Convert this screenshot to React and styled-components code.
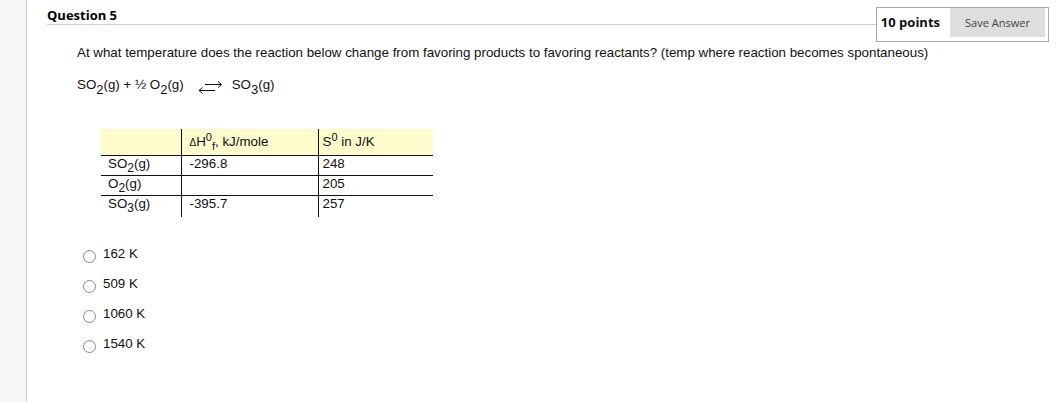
import React from "react";
import styled, { createGlobalStyle } from "styled-components";

const Global = createGlobalStyle`
  html, body { margin: 0; padding: 0; height: 100%; background: #fff; }
  #root { min-height: 100%; }
  * { box-sizing: border-box; }
`;

const Page = styled.div`
  display: flex;
  min-height: 100vh;
  font-family: Arial, "Liberation Sans", sans-serif;
  color: #111;
`;

const Sidebar = styled.aside`
  width: 27px;
  flex: none;
  background: #f6f6f6;
  border-right: 1px solid #d2d2d2;
`;

const Main = styled.main`
  flex: 1;
  padding: 0 11px 0 20px;
`;

const Header = styled.header`
  display: flex;
  align-items: flex-start;
`;

const TitleBar = styled.div`
  flex: 1;
  padding-top: 6px;
  border-bottom: 1px solid #cfcfcf;
`;

const Title = styled.h2`
  margin: 0;
  font-family: "Open Sans", sans-serif;
  font-weight: 700;
  font-size: 13px;
  line-height: 18px;
  color: #000;
`;

const PointsBox = styled.div`
  margin-top: 7px;
  height: 35px;
  display: flex;
  align-items: flex-start;
  gap: 10px;
  padding: 0 3px 0 4px;
  border: 1px solid #a9a9a9;
`;

const Points = styled.span`
  font-family: "Open Sans", sans-serif;
  font-weight: 700;
  font-size: 13px;
  line-height: 29px;
  color: #111;
`;

const SaveButton = styled.button`
  height: 29px;
  width: 95px;
  border: none;
  background: #dedede;
  font-family: "Open Sans", sans-serif;
  font-size: 11px;
  color: #444;
  padding: 0;
`;

const Body = styled.section`
  padding-left: 30px;
  margin-top: 3px;
`;

const Prompt = styled.p`
  margin: 0;
  font-size: 13.33px;
  line-height: 15px;
`;

const Equation = styled.div`
  display: flex;
  align-items: center;
  margin-top: 16px;
  font-size: 13.33px;
  line-height: 15px;
  height: 17px;
`;

const Species = styled.span`
  white-space: pre;
`;

const Sub = styled.sub`
  font-size: ${(p) => p.$size || "12px"};
  line-height: 0;
  vertical-align: ${(p) => p.$shift || "-5px"};
`;

const Sup = styled.sup`
  font-size: 11px;
  line-height: 0;
  vertical-align: 5px;
`;

const Arrow = styled.svg`
  margin: 4px 9px 0 14px;
  flex: none;
`;

const DataTable = styled.table`
  margin: 36px 0 0 24px;
  border-collapse: collapse;
  width: 332px;
  font-size: 13.33px;
  line-height: 15px;
  color: #111;
`;

const HeadRow = styled.tr`
  background: #fefbcc;
  height: 26px;
  border-bottom: 1px solid #111;
`;

const Row = styled.tr`
  height: ${(p) => p.$h}px;
  border-top: ${(p) => (p.$first ? "none" : "1px solid #111")};
`;

const Cell = styled.td`
  padding: ${(p) => (p.$head ? "5px" : "0")} 0 0 ${(p) => p.$pad}px;
  vertical-align: top;
  width: ${(p) => p.$w}px;
  border-left: ${(p) => (p.$divider ? "1px solid #111" : "none")};
  white-space: nowrap;
`;

const Delta = styled.span`
  font-size: 10px;
`;

const Options = styled.div`
  margin-top: 29px;
  padding-left: 6px;
  display: flex;
  flex-direction: column;
  gap: 13px;
`;

const Option = styled.label`
  display: flex;
  align-items: flex-start;
  gap: 7px;
  font-size: 13.33px;
  line-height: 15px;
  color: #111;
`;

const Radio = styled.input`
  appearance: none;
  margin: 4px 0 0 0;
  width: 13px;
  height: 13px;
  border: 1px solid #8a8a8a;
  border-radius: 50%;
  background: #fff;
  flex: none;
`;

const rows = [
  { name: "SO", sub: "2", h: "-296.8", s: "248", height: 20 },
  { name: "O", sub: "2", h: "", s: "205", height: 20 },
  { name: "SO", sub: "3", h: "-395.7", s: "257", height: 22 },
];

const answers = ["162 K", "509 K", "1060 K", "1540 K"];

export default function App() {
  return (
    <>
      <Global />
      <Page>
        <Sidebar />
        <Main>
          <Header>
            <TitleBar>
              <Title>Question 5</Title>
            </TitleBar>
            <PointsBox>
              <Points>10 points</Points>
              <SaveButton type="button">Save Answer</SaveButton>
            </PointsBox>
          </Header>
          <Body>
            <Prompt>
              At what temperature does the reaction below change from favoring products to favoring
              reactants? (temp where reaction becomes spontaneous)
            </Prompt>
            <Equation>
              <Species>
                SO<Sub $size="13px">2</Sub>(g) + ½ O<Sub $size="13px">2</Sub>(g)
              </Species>
              <Arrow width="25" height="14" viewBox="0 0 25 14" aria-hidden="true">
                <path
                  d="M7 4.5 H23.5 M20 1.5 L23.5 4.5 L20 7.5 M1 10.5 H17 M4.5 7.5 L1 10.5 L4.5 13.5"
                  fill="none"
                  stroke="#111"
                  strokeWidth="1"
                />
              </Arrow>
              <Species>
                SO<Sub $size="13px">3</Sub>(g)
              </Species>
            </Equation>
            <DataTable>
              <tbody>
                <HeadRow>
                  <Cell $head $w={80} $pad={7}></Cell>
                  <Cell $head $w={137} $pad={8} $divider>
                    <Delta>Δ</Delta>H<Sup>0</Sup>
                    <Sub $size="11px" $shift="-4px">f</Sub>, kJ/mole
                  </Cell>
                  <Cell $head $w={115} $pad={4} $divider>
                    S<Sup>0</Sup> in J/K
                  </Cell>
                </HeadRow>
                {rows.map((r, i) => (
                  <Row key={i} $h={r.height} $first={i === 0}>
                    <Cell $w={80} $pad={7}>
                      {r.name}
                      <Sub $shift="-4px">{r.sub}</Sub>(g)
                    </Cell>
                    <Cell $w={137} $pad={8} $divider>
                      {r.h}
                    </Cell>
                    <Cell $w={115} $pad={4} $divider>
                      {r.s}
                    </Cell>
                  </Row>
                ))}
              </tbody>
            </DataTable>
            <Options>
              {answers.map((a) => (
                <Option key={a}>
                  <Radio type="radio" name="q5" />
                  {a}
                </Option>
              ))}
            </Options>
          </Body>
        </Main>
      </Page>
    </>
  );
}
